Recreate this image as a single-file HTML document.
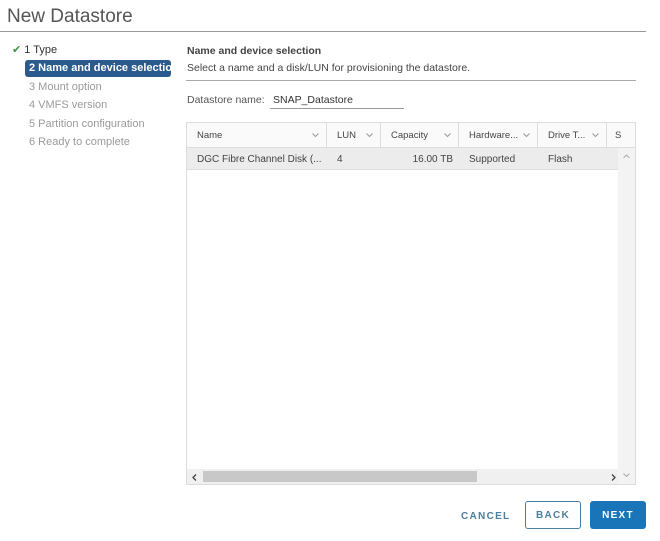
<!DOCTYPE html>
<html><head><style>
*{margin:0;padding:0;box-sizing:border-box}
body{width:660px;height:541px;background:#fff;font-family:"Liberation Sans",sans-serif;color:#333;position:relative;overflow:hidden}
.a{position:absolute;white-space:nowrap}
.step{font-size:11px;color:#9a9a9a}
.th{position:absolute;top:0;height:25px;border-right:1px solid #ddd;font-size:9.5px;color:#444;line-height:25px;padding-left:10px}
.th svg{position:absolute;right:7px;top:10px}
.td{position:absolute;top:25px;height:22px;line-height:22px;font-size:10px;color:#444;padding-left:10px}
</style></head><body>
<div class="a" style="left:7px;top:6px;font-size:19px;color:#555">New Datastore</div>
<div class="a" style="left:0;top:31px;width:646px;height:1px;background:#999"></div>

<div class="a" style="left:12px;top:43px;font-size:11px;color:#333"><span style="color:#3a9a3a">✔</span> 1 Type</div>
<div class="a" style="left:25px;top:60px;width:146px;height:17px;background:#2b5a8c;border-radius:3px;color:#fff;font-size:11px;font-weight:bold;line-height:17px;padding-left:4px;overflow:hidden">2 Name and device selection</div>
<div class="a step" style="left:29px;top:81px">3 Mount option</div>
<div class="a step" style="left:29px;top:99px">4 VMFS version</div>
<div class="a step" style="left:29px;top:118px">5 Partition configuration</div>
<div class="a step" style="left:29px;top:136px">6 Ready to complete</div>

<div class="a" style="left:187px;top:45px;font-size:10.5px;font-weight:bold;color:#444">Name and device selection</div>
<div class="a" style="left:187px;top:62px;font-size:10.5px;color:#444">Select a name and a disk/LUN for provisioning the datastore.</div>
<div class="a" style="left:186px;top:80px;width:450px;height:1px;background:#aaa"></div>
<div class="a" style="left:187px;top:94px;font-size:10.5px;color:#555">Datastore name:</div>
<div class="a" style="left:273px;top:94px;font-size:10.5px;color:#333">SNAP_Datastore</div>
<div class="a" style="left:270px;top:108px;width:134px;height:1px;background:#999"></div>

<div class="a" style="left:186px;top:122px;width:450px;height:363px;border:1px solid #ddd;background:#fff">
 <div style="position:absolute;left:0;top:0;width:448px;height:25px;background:#fafafa;border-bottom:1px solid #ddd"></div>
 <div class="th" style="left:0;width:140px">Name<svg width="7" height="5"><path d="M0.5 0.5L3.5 3.5L6.5 0.5" fill="none" stroke="#999"/></svg></div>
 <div class="th" style="left:140px;width:54px">LUN<svg width="7" height="5"><path d="M0.5 0.5L3.5 3.5L6.5 0.5" fill="none" stroke="#999"/></svg></div>
 <div class="th" style="left:194px;width:78px">Capacity<svg width="7" height="5"><path d="M0.5 0.5L3.5 3.5L6.5 0.5" fill="none" stroke="#999"/></svg></div>
 <div class="th" style="left:272px;width:79px">Hardware...<svg width="7" height="5"><path d="M0.5 0.5L3.5 3.5L6.5 0.5" fill="none" stroke="#999"/></svg></div>
 <div class="th" style="left:351px;width:69px">Drive T...<svg width="7" height="5"><path d="M0.5 0.5L3.5 3.5L6.5 0.5" fill="none" stroke="#999"/></svg></div>
 <div class="th" style="left:420px;width:12px;border:none;padding-left:8px">S</div>
 <div style="position:absolute;left:0;top:25px;width:431px;height:22px;background:#ececec;border-bottom:1px solid #ddd"></div>
 <div class="td" style="left:0;top:26px">DGC Fibre Channel Disk (...</div>
 <div class="td" style="left:140px;top:26px">4</div>
 <div class="td" style="left:194px;width:72px;text-align:right;top:26px">16.00 TB</div>
 <div class="td" style="left:272px;top:26px">Supported</div>
 <div class="td" style="left:351px;top:26px">Flash</div>
 <div style="position:absolute;left:431px;top:25px;width:17px;height:336px;background:#f3f3f3"><svg style="position:absolute;left:5px;top:6px" width="7" height="5"><path d="M0.5 4L3.5 1L6.5 4" fill="none" stroke="#aaa"/></svg><svg style="position:absolute;left:5px;top:325px" width="7" height="5"><path d="M0.5 0.5L3.5 3.5L6.5 0.5" fill="none" stroke="#aaa"/></svg></div>
 <div style="position:absolute;left:0;top:346px;width:431px;height:15px;background:#f0f0f0"></div>
 <div style="position:absolute;left:16px;top:348px;width:274px;height:11px;background:#c8c8c8"></div>
 <svg style="position:absolute;left:5px;top:351px" width="5" height="7"><path d="M4 0.5L1 3.5L4 6.5" fill="none" stroke="#444" stroke-width="1.3"/></svg>
 <svg style="position:absolute;left:424px;top:351px" width="5" height="7"><path d="M1 0.5L4 3.5L1 6.5" fill="none" stroke="#444" stroke-width="1.3"/></svg>
</div>

<div class="a" style="left:461px;top:511px;font-size:10px;letter-spacing:1.3px;color:#4a7fa0;font-weight:bold">CANCEL</div>
<div class="a" style="left:525px;top:501px;width:56px;height:28px;border:1px solid #4a7fa0;border-radius:3px;text-align:center;line-height:28px;font-size:10px;letter-spacing:1.3px;color:#4a7fa0;font-weight:bold">BACK</div>
<div class="a" style="left:590px;top:501px;width:56px;height:28px;background:#1a75b8;border-radius:3px;text-align:center;line-height:29px;font-size:10px;letter-spacing:1.3px;color:#fff;font-weight:bold">NEXT</div>
</body></html>
